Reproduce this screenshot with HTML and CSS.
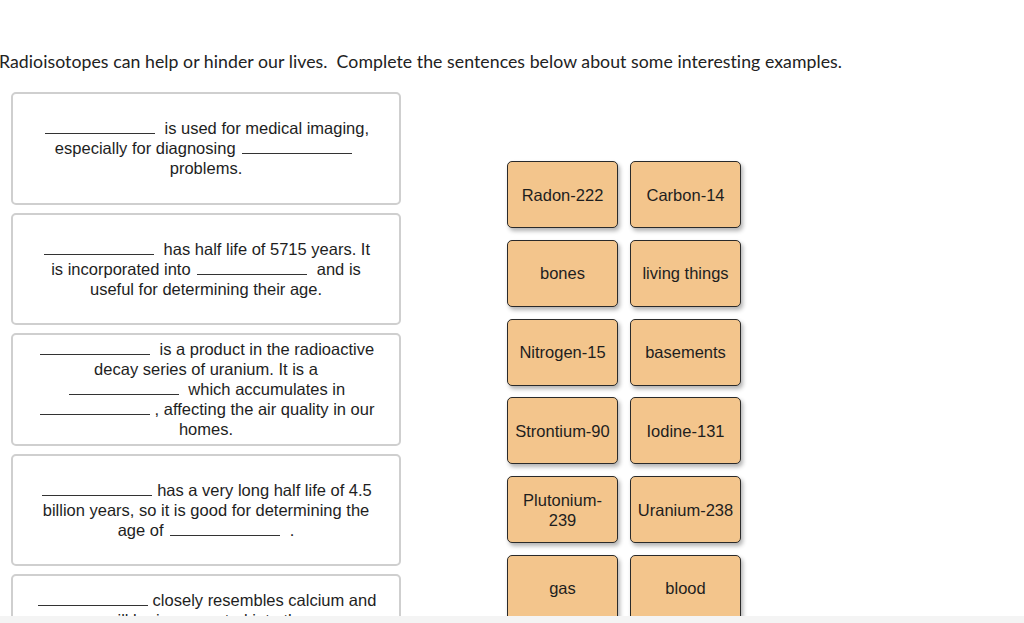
FILE: index.html
```html
<!DOCTYPE html>
<html>
<head>
<meta charset="utf-8">
<link rel="stylesheet" href="styles.css">
</head>
<body>
<div class="page">
  <p class="intro">Radioisotopes can help or hinder our lives.&nbsp; Complete the sentences below about some interesting examples.</p>
  <div class="work">
    <div class="cards">
      <div class="card"><p><span class="blank"></span> is used for medical imaging, especially for diagnosing <span class="blank"></span> problems.</p></div>
      <div class="card"><p><span class="blank"></span> has half life of 5715 years. It is incorporated into <span class="blank"></span> and is useful for determining their age.</p></div>
      <div class="card"><p><span class="blank"></span> is a product in the radioactive decay series of uranium. It is a <span class="blank"></span> which accumulates in <span class="blank"></span>, affecting the air quality in our homes.</p></div>
      <div class="card"><p><span class="blank"></span>has a very long half life of 4.5 billion years, so it is good for determining the age of <span class="blank"></span> .</p></div>
      <div class="card"><p><span class="blank"></span>closely resembles calcium and will be incorporated into the <span class="nowrap"><span class="blank"></span>, where its</span> radiation can damage the <span class="blank"></span> .</p></div>
    </div>
    <div class="tiles">
      <div class="tile">Radon-222</div>
      <div class="tile">Carbon-14</div>
      <div class="tile">bones</div>
      <div class="tile">living things</div>
      <div class="tile">Nitrogen-15</div>
      <div class="tile">basements</div>
      <div class="tile">Strontium-90</div>
      <div class="tile">Iodine-131</div>
      <div class="tile">Plutonium-239</div>
      <div class="tile">Uranium-238</div>
      <div class="tile">gas</div>
      <div class="tile">blood</div>
    </div>
  </div>
</div>
<div class="strip"></div>
</body>
</html>
```
FILE: styles.css
```css
html, body {
  margin: 0;
  padding: 0;
  background: #ffffff;
}
.page {
  height: 616px;
  overflow: hidden;
  background: #ffffff;
}
.strip {
  height: 7px;
  background: #f4f4f4;
}
.intro {
  margin: 0;
  padding: 52px 0 0 0;
  margin-left: -1px;
  font-family: Lato, "Liberation Sans", sans-serif;
  font-size: 17.7px;
  line-height: 20px;
  color: #222222;
  letter-spacing: 0.05px;
}
.work {
  display: flex;
  align-items: flex-start;
  padding: 20px 0 0 11px;
}
.cards {
  display: flex;
  flex-direction: column;
  gap: 8px;
  width: 390px;
  flex: none;
}
.card {
  box-sizing: border-box;
  height: 112.5px;
  border: 2px solid #cfcfcf;
  border-radius: 5px;
  display: flex;
  align-items: center;
  justify-content: center;
  flex: none;
}
.card p {
  margin: 0;
  width: 344px;
  text-align: center;
  font-family: "Liberation Sans", Arial, sans-serif;
  font-size: 16.5px;
  line-height: 20px;
  color: #1e1e1e;
}
.nowrap {
  white-space: nowrap;
}
.blank {
  display: inline-block;
  width: 110px;
  height: 15px;
  border-bottom: 1px solid #333333;
  margin: 0 5px 0 2px;
  vertical-align: baseline;
}
.tiles {
  display: grid;
  grid-template-columns: 111px 111px;
  grid-auto-rows: 67px;
  column-gap: 12px;
  row-gap: 11.8px;
  margin-left: 106px;
  margin-top: 69px;
}
.tile {
  box-sizing: border-box;
  background: #f3c58c;
  border: 1px solid #2a2a2a;
  border-radius: 5px;
  box-shadow: 2px 3px 4px rgba(0, 0, 0, 0.3);
  display: flex;
  align-items: center;
  justify-content: center;
  text-align: center;
  padding: 0 4px;
  font-family: "Liberation Sans", Arial, sans-serif;
  font-size: 16.5px;
  line-height: 20px;
  color: #1e1e1e;
}
```
